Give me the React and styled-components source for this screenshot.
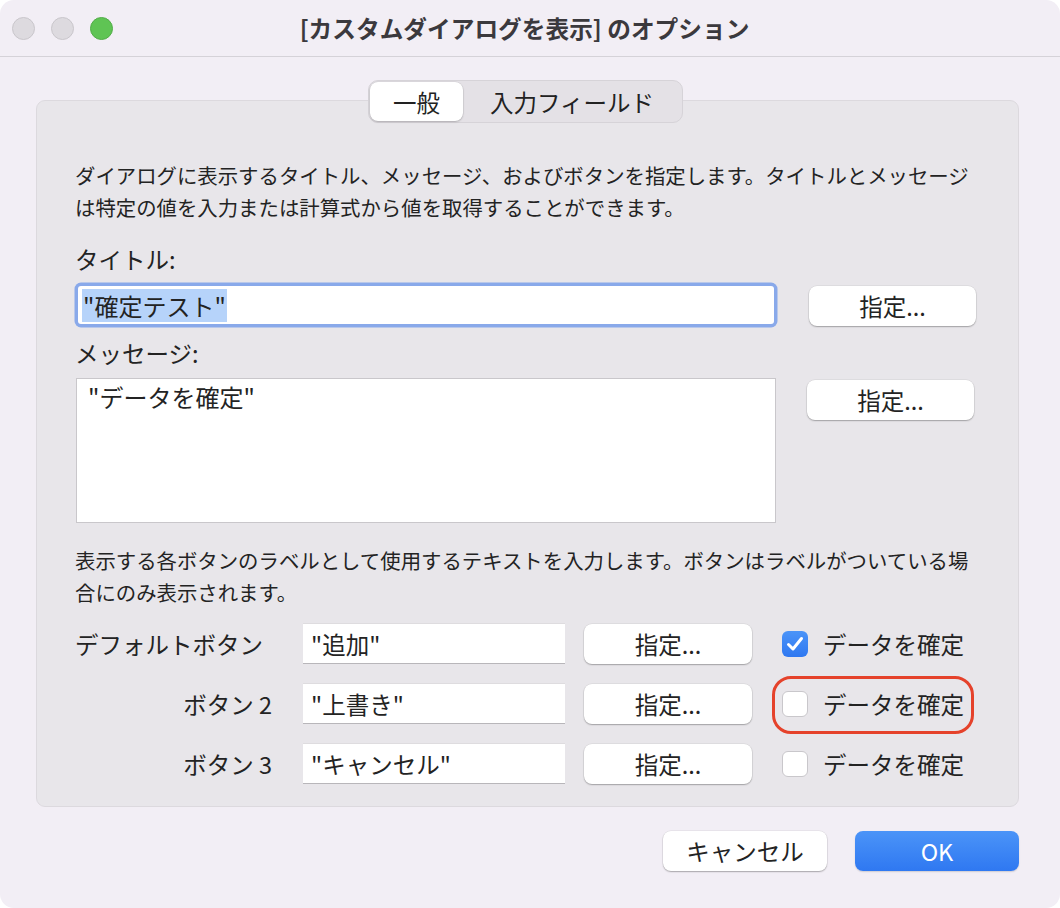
import styled, { createGlobalStyle } from "styled-components";

const GlobalStyle = createGlobalStyle`
  html, body {
    margin: 0;
    padding: 0;
    background: #ffffff;
  }
  body {
    font-family: "Noto Sans CJK JP", "Noto Sans", "Liberation Sans", sans-serif;
    color: #232323;
  }
`;

const Window = styled.div`
  width: 1060px;
  height: 908px;
  box-sizing: border-box;
  background: #f2eef5;
  border-radius: 14px;
  overflow: hidden;
  display: flex;
  flex-direction: column;
`;

const TitleBar = styled.div`
  height: 56px;
  flex-shrink: 0;
  border-bottom: 1px solid #d5d2d8;
  display: flex;
  align-items: center;
  padding: 0 12px;
`;

const Lights = styled.div`
  display: flex;
  gap: 16px;
`;

const Light = styled.span`
  width: 23px;
  height: 23px;
  border-radius: 50%;
  box-sizing: border-box;
  background: ${(p) => (p.$green ? "#5fc454" : "#dddadf")};
  border: 1px solid ${(p) => (p.$green ? "#52ad48" : "#c9c6cb")};
`;

const WindowTitle = styled.div`
  flex: 1;
  text-align: center;
  font-size: 23.7px;
  font-weight: 700;
  color: #3b393d;
  margin-right: 112px;
`;

const Body = styled.div`
  flex: 1;
  display: flex;
  flex-direction: column;
  padding: 43px 41px 0 36px;
`;

const Panel = styled.div`
  background: #e8e6ea;
  border: 1px solid #dcd9de;
  border-radius: 9px;
  padding: 0 42px 22px 38px;
  display: flex;
  flex-direction: column;
`;

const Tabs = styled.div`
  align-self: center;
  margin: -21px 0 0 0;
  display: flex;
  height: 43px;
  box-sizing: border-box;
  padding: 1px;
  background: #e4e1e6;
  border: 1px solid #d6d3d8;
  border-radius: 10px;
`;

const Tab = styled.div`
  display: flex;
  align-items: center;
  justify-content: center;
  padding: 0 ${(p) => (p.$active ? "23px" : "27px")};
  font-size: 23.5px;
  color: #222;
  border-radius: 8px;
  background: ${(p) => (p.$active ? "#ffffff" : "transparent")};
  box-shadow: ${(p) =>
    p.$active ? "0 1px 2px rgba(0,0,0,0.2), 0 0 0 0.5px rgba(0,0,0,0.08)" : "none"};
`;

const Desc = styled.p`
  margin: ${(p) => p.$top}px 0 0;
  font-size: 20.4px;
  line-height: 32px;
  color: #232323;
  white-space: nowrap;
`;

const Label = styled.div`
  margin-top: ${(p) => p.$top}px;
  font-size: 23.5px;
  line-height: 32px;
  color: #232323;
`;

const FieldRow = styled.div`
  display: flex;
  align-items: ${(p) => (p.$top ? "flex-start" : "center")};
  margin-top: ${(p) => p.$mt}px;
  padding-left: ${(p) => p.$pl || 0}px;
  gap: ${(p) => p.$gap || 32}px;
`;

const FocusInput = styled.div`
  width: 696px;
  height: 38px;
  margin: 4px 3px 3px;
  box-sizing: border-box;
  background: #fff;
  border-radius: 3px;
  box-shadow: 0 0 0 3.5px #89a9ea;
  display: flex;
  align-items: center;
  padding-left: 4px;
  font-size: 24px;
`;

const Selected = styled.span`
  background: #b6d3fa;
  line-height: 33px;
  padding: 0 1px;
`;

const TextArea = styled.div`
  width: 700px;
  height: 145px;
  box-sizing: border-box;
  background: #fff;
  border: 1px solid #c9c7cb;
  padding: 2px 11px;
  font-size: 24px;
  line-height: 32px;
`;

const PushButton = styled.div`
  width: ${(p) => p.$w || 167}px;
  height: 40px;
  flex-shrink: 0;
  box-sizing: border-box;
  border-radius: 8px;
  display: flex;
  align-items: center;
  justify-content: center;
  font-size: 23.5px;
  color: ${(p) => (p.$primary ? "#fff" : "#232323")};
  background: ${(p) =>
    p.$primary ? "linear-gradient(#4b94f8, #2f78f1)" : "#ffffff"};
  box-shadow: ${(p) =>
    p.$primary
      ? "0 1px 1.5px rgba(0,0,0,0.15)"
      : "0 1px 1.5px rgba(0,0,0,0.28), 0 0 0 0.5px rgba(0,0,0,0.08)"};
  margin-top: ${(p) => p.$mt || 0}px;
  margin-left: ${(p) => p.$ml || 0}px;
`;

const ButtonGrid = styled.div`
  margin-top: 15px;
  display: grid;
  grid-template-columns: 197px 293px 187px auto;
  row-gap: 19px;
  align-items: center;
`;

const RowLabel = styled.div`
  font-size: 23.5px;
  text-align: ${(p) => (p.$left ? "left" : "right")};
  white-space: nowrap;
`;

const SmallInput = styled.div`
  height: 41px;
  margin-left: 31px;
  box-sizing: border-box;
  background: #fff;
  border-top: 1px solid #dedcdf;
  border-bottom: 1px solid #b8b6ba;
  display: flex;
  align-items: center;
  padding-left: 8px;
  font-size: 23.5px;
`;

const CheckField = styled.div`
  position: relative;
  display: flex;
  align-items: center;
  gap: 15px;
  margin-left: 30px;
  font-size: 23.5px;
  white-space: nowrap;
`;

const Ring = styled.span`
  position: absolute;
  left: -10px;
  top: -11px;
  width: 202px;
  height: 58px;
  box-sizing: border-box;
  border: 3px solid #e5422b;
  border-radius: 19px;
`;

const Box = styled.span`
  width: 26px;
  height: 26px;
  box-sizing: border-box;
  border-radius: 6px;
  display: flex;
  align-items: center;
  justify-content: center;
  background: ${(p) => (p.$checked ? "linear-gradient(#4b94f8, #2f78f1)" : "#fff")};
  border: ${(p) => (p.$checked ? "none" : "1px solid #c9c7cb")};
`;

const Footer = styled.div`
  display: flex;
  justify-content: flex-end;
  gap: 28px;
  margin-top: 24px;
`;

const Check = () => (
  <svg width="18" height="16" viewBox="0 0 18 16">
    <path
      d="M2.5 8.5 L7 13 L15.5 2.5"
      fill="none"
      stroke="#fff"
      strokeWidth="3"
      strokeLinecap="round"
      strokeLinejoin="round"
    />
  </svg>
);

const rows = [
  { label: "デフォルトボタン", value: "\"追加\"", checked: true, left: true },
  { label: "ボタン 2", value: "\"上書き\"", highlight: true },
  { label: "ボタン 3", value: "\"キャンセル\"" },
];

const App = () => (
  <>
    <GlobalStyle />
    <Window>
      <TitleBar>
        <Lights>
          <Light />
          <Light />
          <Light $green />
        </Lights>
        <WindowTitle>[カスタムダイアログを表示] のオプション</WindowTitle>
      </TitleBar>
      <Body>
        <Panel>
          <Tabs>
            <Tab $active>一般</Tab>
            <Tab>入力フィールド</Tab>
          </Tabs>
          <Desc $top={36}>
            ダイアログに表示するタイトル、メッセージ、およびボタンを指定します。タイトルとメッセージ
            <br />
            は特定の値を入力または計算式から値を取得することができます。
          </Desc>
          <Label $top={20}>タイトル:</Label>
          <FieldRow $mt={7}>
            <FocusInput>
              <Selected>"確定テスト"</Selected>
            </FocusInput>
            <PushButton $mt={2}>指定...</PushButton>
          </FieldRow>
          <Label $top={10}>メッセージ:</Label>
          <FieldRow $mt={9} $top $pl={1} $gap={31}>
            <TextArea>"データを確定"</TextArea>
            <PushButton $mt={2}>指定...</PushButton>
          </FieldRow>
          <Desc $top={21}>
            表示する各ボタンのラベルとして使用するテキストを入力します。ボタンはラベルがついている場
            <br />
            合にのみ表示されます。
          </Desc>
          <ButtonGrid>
            {rows.map((r) => [
              <RowLabel key={r.label + "l"} $left={r.left}>
                {r.label}
              </RowLabel>,
              <SmallInput key={r.label + "i"}>{r.value}</SmallInput>,
              <PushButton key={r.label + "b"} $w={168} $ml={19}>
                指定...
              </PushButton>,
              <CheckField key={r.label + "c"}>
                {r.highlight && <Ring />}
                <Box $checked={r.checked}>{r.checked && <Check />}</Box>
                データを確定
              </CheckField>,
            ])}
          </ButtonGrid>
        </Panel>
        <Footer>
          <PushButton $w={164}>キャンセル</PushButton>
          <PushButton $w={164} $primary>
            OK
          </PushButton>
        </Footer>
      </Body>
    </Window>
  </>
);

export default App;
